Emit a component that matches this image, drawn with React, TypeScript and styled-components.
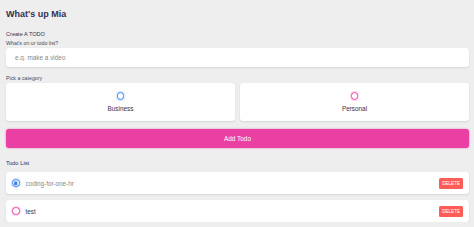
import React, { useState } from 'react';
import styled, { createGlobalStyle, css } from 'styled-components';

const GlobalStyle = createGlobalStyle`
  html, body {
    margin: 0;
    padding: 0;
    background: #eeeeee;
    font-family: "Liberation Sans", Arial, sans-serif;
    color: #313154;
  }
  * {
    box-sizing: border-box;
  }
`;

const Page = styled.main`
  display: flex;
  flex-direction: column;
  padding: 9px 5px 0 6px;
`;

const Greeting = styled.h2`
  margin: 0;
  font-size: 9px;
  line-height: 11px;
  font-weight: 700;
  color: #313154;
`;

const SectionTitle = styled.h3<{ $top: number }>`
  margin: ${(p) => p.$top}px 0 0;
  font-size: 5.6px;
  line-height: 7px;
  font-weight: 400;
  color: #313154;
`;

const Hint = styled.h4<{ $top: number }>`
  margin: ${(p) => p.$top}px 0 0;
  font-size: 5.3px;
  line-height: 6px;
  font-weight: 400;
  color: #4a4a60;
`;

const TextInput = styled.input`
  margin-top: 2px;
  width: 100%;
  height: 19px;
  border: none;
  outline: none;
  border-radius: 3px;
  background: #fff;
  box-shadow: 0 1px 2px rgba(0, 0, 0, 0.1);
  padding: 0 9px;
  font-family: inherit;
  font-size: 6.4px;
  color: #313154;
  &::placeholder {
    color: #8a8a8a;
  }
`;

const Options = styled.div`
  margin-top: 2px;
  display: grid;
  grid-template-columns: 1fr 1fr;
  gap: 5px;
`;

const OptionCard = styled.label`
  height: 38px;
  display: flex;
  flex-direction: column;
  align-items: center;
  padding-top: 9px;
  background: #fff;
  border-radius: 3px;
  box-shadow: 0 1px 2px rgba(0, 0, 0, 0.1);
  cursor: pointer;
`;

const Bubble = styled.span<{ $kind: 'business' | 'personal'; $checked?: boolean }>`
  position: relative;
  display: block;
  flex: none;
  width: 7.5px;
  height: 7.5px;
  border-radius: 50%;
  border: 1px solid ${(p) => (p.$kind === 'business' ? '#3a82ee' : '#ea40a4')};
  box-shadow: 0 0 2px
    ${(p) => (p.$kind === 'business' ? 'rgba(58, 130, 238, 0.75)' : 'rgba(234, 64, 164, 0.75)')};
  ${(p) =>
    p.$checked &&
    css`
      &::after {
        content: '';
        position: absolute;
        left: 50%;
        top: 50%;
        width: 3.6px;
        height: 3.6px;
        border-radius: 50%;
        transform: translate(-50%, -50%);
        background: ${p.$kind === 'business' ? '#3a82ee' : '#ea40a4'};
        box-shadow: 0 0 2px
          ${p.$kind === 'business' ? 'rgba(58, 130, 238, 0.75)' : 'rgba(234, 64, 164, 0.75)'};
      }
    `}
`;

const OptionLabel = styled.span`
  margin-top: 5px;
  font-size: 6.4px;
  line-height: 8px;
  color: #313154;
`;

const AddButton = styled.button`
  margin-top: 8px;
  height: 19px;
  width: 100%;
  border: none;
  border-radius: 3px;
  background: #ea40a4;
  box-shadow: 0 0 2px rgba(234, 64, 164, 0.75);
  color: #fff;
  font-family: inherit;
  font-size: 6.4px;
  cursor: pointer;
`;

const ListTitle = styled.h3`
  margin: 12px 0 0;
  font-size: 5.8px;
  line-height: 7px;
  font-weight: 400;
  color: #313154;
`;

const List = styled.ul`
  margin: 5px 0 0;
  padding: 0;
  list-style: none;
  display: flex;
  flex-direction: column;
  gap: 6px;
`;

const Item = styled.li`
  height: 22px;
  display: flex;
  align-items: center;
  gap: 6px;
  padding: 0 6px;
  background: #fff;
  border-radius: 3px;
  box-shadow: 0 1px 2px rgba(0, 0, 0, 0.1);
`;

const ItemText = styled.span<{ $done: boolean }>`
  flex: 1;
  font-size: 6.3px;
  color: ${(p) => (p.$done ? '#888' : '#313154')};
`;

const DeleteButton = styled.button`
  height: 11px;
  padding: 0 3px;
  border: none;
  border-radius: 1.5px;
  background: #ff5b57;
  color: #fff;
  font-family: inherit;
  font-size: 4.6px;
  text-transform: uppercase;
  cursor: pointer;
`;

type Category = 'business' | 'personal';

interface Todo {
  id: number;
  content: string;
  category: Category;
  done: boolean;
}

export default function App() {
  const [todos, setTodos] = useState<Todo[]>([
    { id: 1, content: 'coding-for-one-hr', category: 'business', done: true },
    { id: 2, content: 'test', category: 'personal', done: false },
  ]);

  return (
    <>
      <GlobalStyle />
      <Page>
        <Greeting>What's up Mia</Greeting>

        <SectionTitle $top={11}>Create A TODO</SectionTitle>
        <Hint $top={2}>What's on ur todo list?</Hint>
        <TextInput placeholder="e.g. make a video" />

        <Hint $top={8}>Pick a category</Hint>
        <Options>
          <OptionCard>
            <Bubble $kind="business" />
            <OptionLabel>Business</OptionLabel>
          </OptionCard>
          <OptionCard>
            <Bubble $kind="personal" />
            <OptionLabel>Personal</OptionLabel>
          </OptionCard>
        </Options>

        <AddButton>Add Todo</AddButton>

        <ListTitle>Todo List</ListTitle>
        <List>
          {todos.map((todo) => (
            <Item key={todo.id}>
              <Bubble $kind={todo.category} $checked={todo.done} />
              <ItemText $done={todo.done}>{todo.content}</ItemText>
              <DeleteButton onClick={() => setTodos(todos.filter((t) => t.id !== todo.id))}>
                Delete
              </DeleteButton>
            </Item>
          ))}
        </List>
      </Page>
    </>
  );
}
